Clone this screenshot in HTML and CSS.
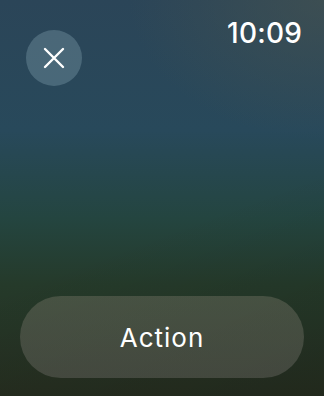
FILE: index.html
```html
<!DOCTYPE html>
<html>
<head>
<meta charset="utf-8">
<link rel="stylesheet" href="styles.css">
</head>
<body>
<div class="screen">
  <header class="top">
    <button class="close" aria-label="Close">
      <svg width="22" height="22" viewBox="0 0 22 22"><path d="M2 2 L20 20 M20 2 L2 20" stroke="#fff" stroke-width="2.4" stroke-linecap="round"/></svg>
    </button>
    <div class="time">10:09</div>
  </header>
  <div class="spacer"></div>
  <button class="action">Action</button>
</div>
</body>
</html>
```
FILE: styles.css
```css
html, body { margin: 0; padding: 0; }
body { width: 324px; height: 396px; overflow: hidden; font-family: Inter, "Noto Sans", sans-serif; }
.screen {
  width: 324px; height: 396px; box-sizing: border-box;
  display: flex; flex-direction: column;
  padding: 18px 20px 18px 20px;
  background:
    radial-gradient(ellipse 60% 35% at 100% 0%, rgba(68,82,80,0.7), rgba(68,82,80,0) 100%),
    linear-gradient(160deg, rgba(0,0,0,0) 55%, rgba(0,0,0,0.12) 100%),
    linear-gradient(180deg, #2b4558 0%, #28495b 33%, #244540 55%, #253a2a 72%, #262e20 100%);
}
.top { display: flex; justify-content: space-between; align-items: flex-start; }
.close {
  margin: 12px 0 0 6px;
  width: 56px; height: 56px; border-radius: 50%; border: 0; padding: 0;
  background: rgba(120,150,165,0.42);
  display: flex; align-items: center; justify-content: center;
}
.time { color: #fff; font-size: 28px; font-weight: 500; line-height: 34px; margin: -2px 2px 0 0; letter-spacing: 0.2px; }
.spacer { flex: 1; }
.action {
  height: 82px; width: 284px; border: 0; border-radius: 41px;
  background: linear-gradient(180deg, rgba(108,110,95,0.48), rgba(102,102,96,0.48));
  color: #fff; font-family: Inter, "Noto Sans", sans-serif; font-size: 26px; font-weight: 400; letter-spacing: 1px;
}
```
